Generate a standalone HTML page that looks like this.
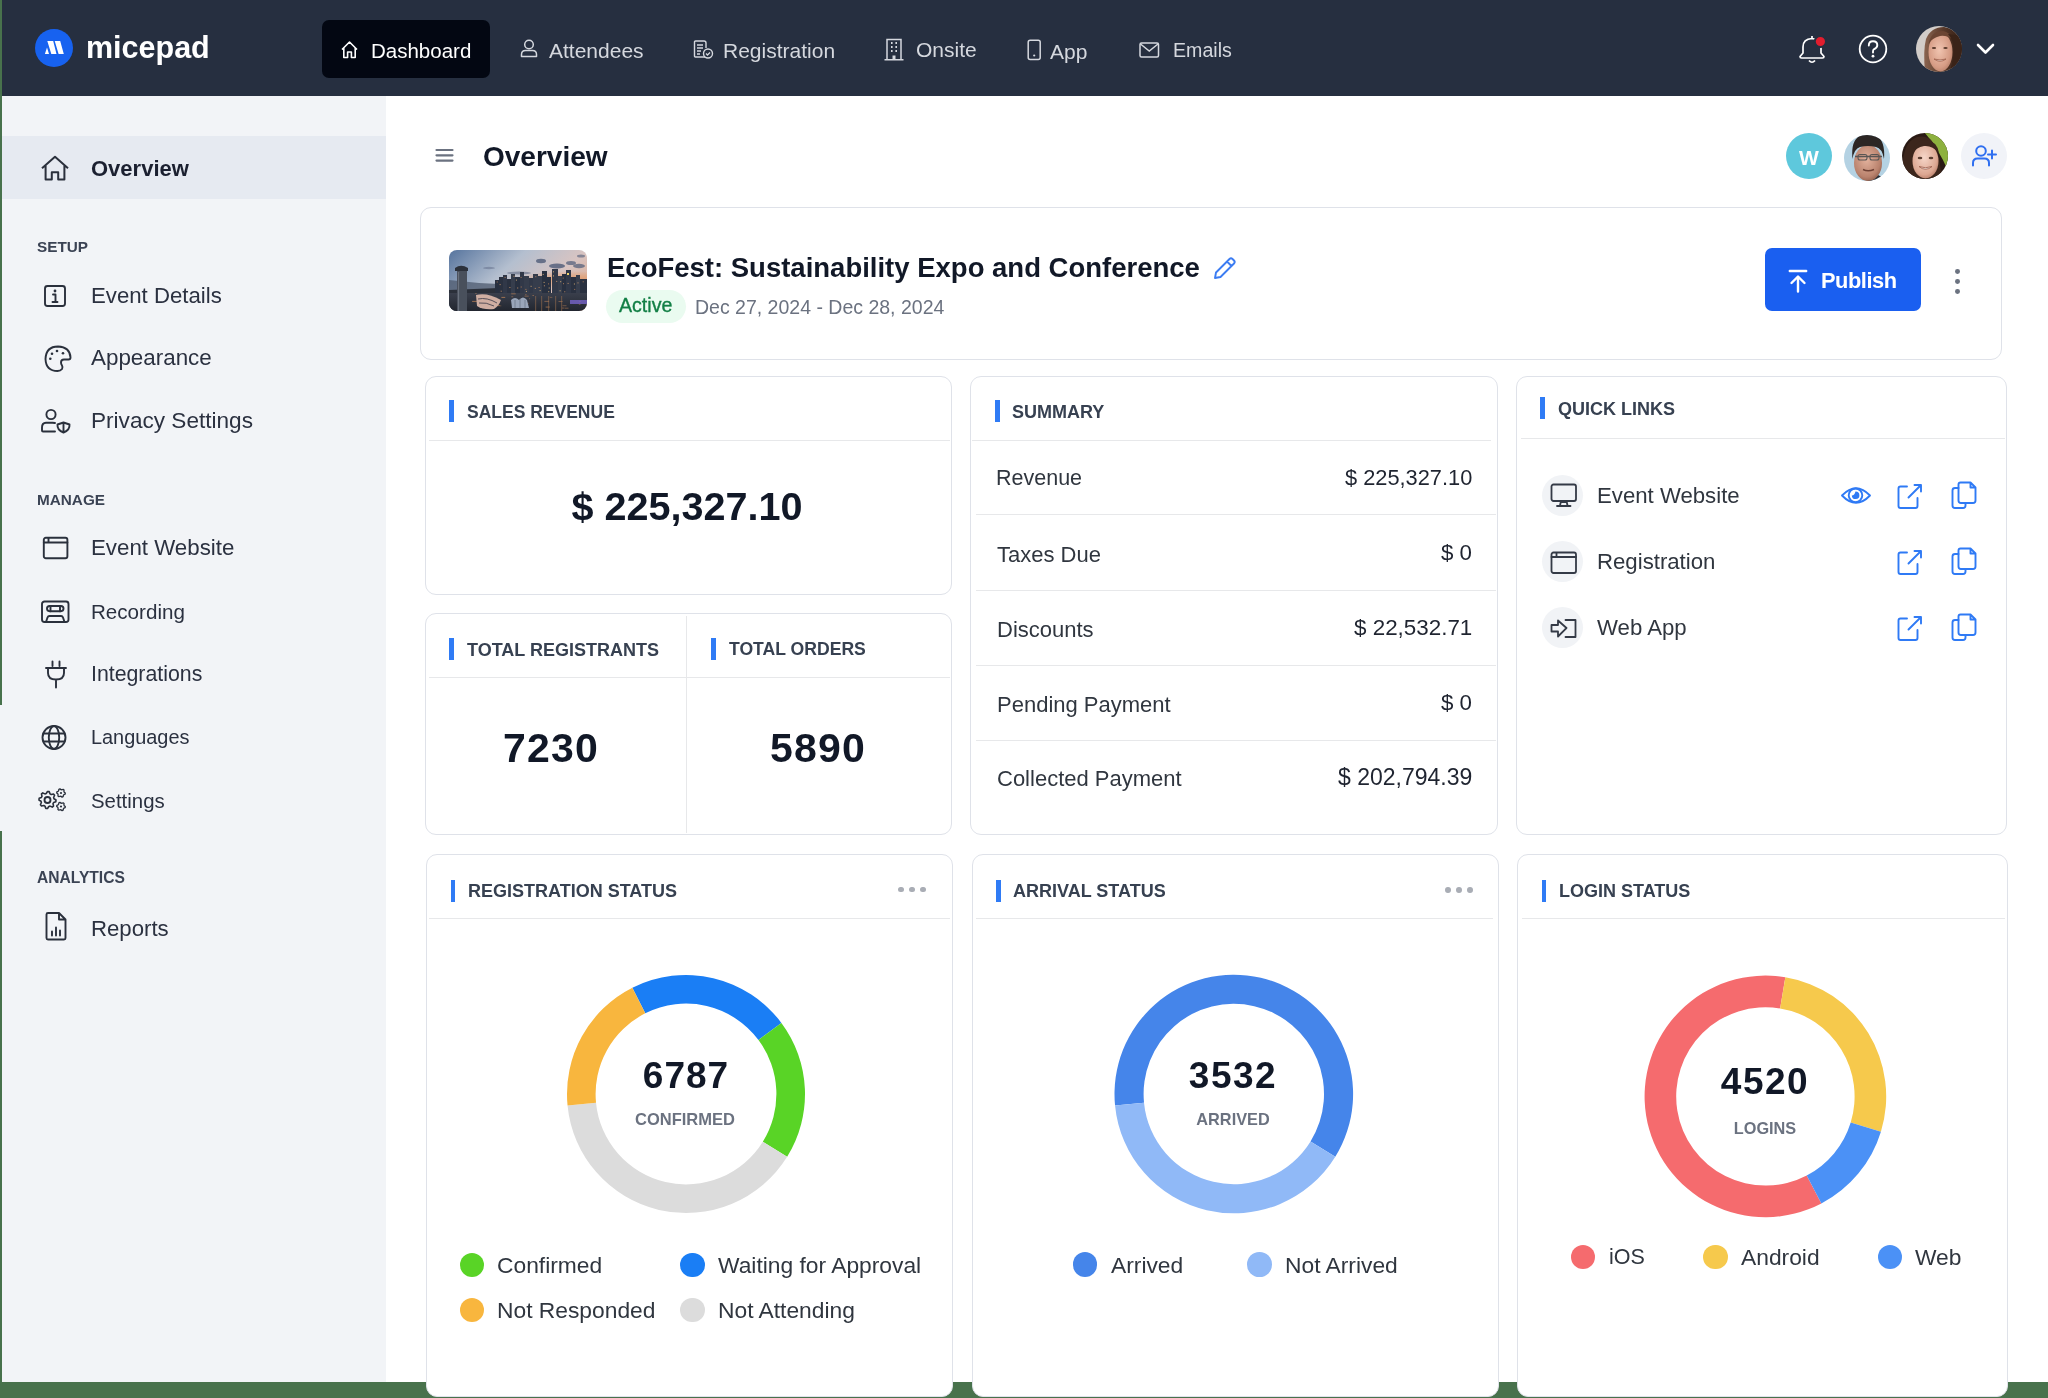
<!DOCTYPE html>
<html><head><meta charset="utf-8"><title>micepad Overview</title>
<style>
html,body{margin:0;padding:0;}
body{width:2048px;height:1398px;position:relative;overflow:hidden;background:#48724c;font-family:"Liberation Sans",sans-serif;}
body>div{position:absolute;}
.t{position:absolute;white-space:nowrap;line-height:1;will-change:transform;}
</style></head><body>
<div style="left:2px;top:0px;width:2046px;height:1382px;background:#ffffff;"></div>
<div style="left:2px;top:0px;width:2046px;height:96px;background:#262f40;"></div>
<div style="left:2px;top:96px;width:384px;height:1286px;background:#f2f4f7;"></div>
<div style="left:0px;top:705px;width:2px;height:126px;background:#f2f4f7;"></div>
<svg style="position:absolute;left:35px;top:29px;" width="38" height="38" viewBox="0 0 38 38"><circle cx="19" cy="19" r="19" fill="#1762f0"/><path d="M9.9 25 L12 18.5 L14 25 Z M12.3 11.9 H18.2 L21.5 25 H16.3 Z M19.7 11.9 H25.2 L28.8 25 H23.6 Z" fill="#fff"/></svg>
<div class="t" style="left:85.50px;top:32.08px;font-size:30.5px;color:#ffffff;font-weight:700;">micepad</div>
<div style="left:322px;top:20px;width:168px;height:58px;background:#030712;border-radius:7px;"></div>
<svg style="position:absolute;left:340px;top:40px;" width="19" height="19" viewBox="0 0 19 19"><path d="M2 9.5 L9.5 2 L17 9.5 M3.8 8 V17.5 H7.6 V12 H11.4 V17.5 H15.2 V8" fill="none" stroke="#fff" stroke-width="1.6" stroke-linejoin="round"/></svg>
<div class="t" style="left:370.80px;top:40.85px;font-size:20.5px;color:#ffffff;font-weight:400;">Dashboard</div>
<svg style="position:absolute;left:520px;top:39px;" width="18" height="19" viewBox="0 0 18 19"><circle cx="9" cy="5.5" r="4.3" fill="none" stroke="#d5d8de" stroke-width="1.5"/><path d="M1.5 17.5 V15.5 Q1.5 11.5 5.5 11.5 H12.5 Q16.5 11.5 16.5 15.5 V17.5 Z" fill="none" stroke="#d5d8de" stroke-width="1.5" stroke-linejoin="round"/></svg>
<div class="t" style="left:549.30px;top:40.02px;font-size:21px;color:#d5d8de;font-weight:400;">Attendees</div>
<svg style="position:absolute;left:693px;top:40px;" width="21" height="19" viewBox="0 0 21 19"><path d="M12 17 H2.5 Q1.5 17 1.5 16 V2 Q1.5 1 2.5 1 H11 Q13 1 13 3 V8" fill="none" stroke="#d5d8de" stroke-width="1.4"/><path d="M4 5h6 M4 8h6 M4 11h4 M4 14h3" stroke="#d5d8de" stroke-width="1.4"/><circle cx="15" cy="13.5" r="4.5" fill="none" stroke="#d5d8de" stroke-width="1.4"/><path d="M13 13.5l1.5 1.5 2.5-2.5" fill="none" stroke="#d5d8de" stroke-width="1.3"/></svg>
<div class="t" style="left:722.80px;top:40.02px;font-size:21px;color:#d5d8de;font-weight:400;">Registration</div>
<svg style="position:absolute;left:884px;top:38px;" width="20" height="23" viewBox="0 0 20 23"><path d="M3 21.5 V1.5 H17 V21.5 M0.5 21.8 H19.5" fill="none" stroke="#d5d8de" stroke-width="1.5"/><path d="M7 5h1.6M11.4 5H13M7 9h1.6M11.4 9H13M7 13h1.6M11.4 13H13" stroke="#d5d8de" stroke-width="2.2"/><path d="M8.5 21.5 V17.5 H11.5 V21.5" fill="#d5d8de"/></svg>
<div class="t" style="left:916.00px;top:39.12px;font-size:21px;color:#d5d8de;font-weight:400;">Onsite</div>
<svg style="position:absolute;left:1027px;top:39px;" width="15" height="22" viewBox="0 0 15 22"><rect x="1.2" y="1.2" width="12" height="19.2" rx="2" fill="none" stroke="#d5d8de" stroke-width="1.5"/><circle cx="7.2" cy="16.5" r="1.1" fill="#d5d8de"/></svg>
<div class="t" style="left:1050.40px;top:40.62px;font-size:21px;color:#d5d8de;font-weight:400;">App</div>
<svg style="position:absolute;left:1139px;top:42px;" width="21" height="16" viewBox="0 0 21 16"><rect x="1" y="1" width="18.5" height="14" rx="1.5" fill="none" stroke="#d5d8de" stroke-width="1.5"/><path d="M1.5 2 L10.25 9 L19 2" fill="none" stroke="#d5d8de" stroke-width="1.5"/></svg>
<div class="t" style="left:1172.50px;top:41.41px;font-size:19.6px;color:#d5d8de;font-weight:400;">Emails</div>
<svg style="position:absolute;left:1798px;top:33px;" width="30" height="33" viewBox="0 0 30 33"><path d="M14 3 V5.5 M5 20 V14 Q5 6 14 5.5 Q23 6 23 14 V20 L26 23.5 Q26 25 24.5 25 H3.5 Q2 25 2 23.5 Z M11 27.5 Q14 31 17 27.5" fill="none" stroke="#fff" stroke-width="1.7" stroke-linejoin="round"/><circle cx="22.4" cy="8.5" r="5.6" fill="#e11d2e" stroke="#262f40" stroke-width="2"/></svg>
<svg style="position:absolute;left:1858px;top:34px;" width="30" height="30" viewBox="0 0 30 30"><circle cx="15" cy="15" r="13.3" fill="none" stroke="#fff" stroke-width="1.8"/><path d="M10.8 11.5 Q10.8 7.3 15 7.3 Q19.3 7.3 19.3 11.3 Q19.3 13.8 15.8 15.3 Q15 15.8 15 17.8 V18.5" fill="none" stroke="#fff" stroke-width="1.9" stroke-linecap="round"/><circle cx="15" cy="22.2" r="1.4" fill="#fff"/></svg>
<svg style="position:absolute;left:1916px;top:26px" width="46" height="46" viewBox="0 0 46 46"><defs><clipPath id="ca1"><circle cx="23" cy="23" r="23"/></clipPath><radialGradient id="sk1" cx="0.45" cy="0.45" r="0.6"><stop offset="0" stop-color="#f0c4b0"/><stop offset="0.75" stop-color="#d69c85"/><stop offset="1" stop-color="#b8806a"/></radialGradient><linearGradient id="hr1" x1="0" y1="0" x2="1" y2="0"><stop offset="0" stop-color="#8a6450"/><stop offset="0.5" stop-color="#5a3a2a"/><stop offset="1" stop-color="#2f1c14"/></linearGradient></defs><g clip-path="url(#ca1)"><rect width="46" height="46" fill="#d2cdc9"/><path d="M9 46 Q7 24 10 13 Q15 1 28 1 Q42 3 46 18 L46 46 Z" fill="url(#hr1)"/><ellipse cx="24.5" cy="26" rx="12" ry="19.5" fill="url(#sk1)"/><path d="M12.5 18 Q15 5 27 5 Q34 6 37 14 Q31 9 24 10 Q16 12 12.5 18 Z" fill="#6b4533"/><path d="M32 8 Q38 14 37.5 26 Q37 38 33 46 L46 46 V10 Z" fill="#3a2318"/><ellipse cx="18" cy="22" rx="2.2" ry="1.1" fill="#5a3a2c"/><ellipse cx="29.5" cy="22" rx="2.2" ry="1.1" fill="#5a3a2c"/><path d="M18 33 Q24 37.5 30 33 Q24 35 18 33 Z" fill="#f4e9e2" stroke="#9a5a48" stroke-width="0.8"/></g></svg>
<svg style="position:absolute;left:1976px;top:43px;" width="19" height="12" viewBox="0 0 19 12"><path d="M2 2 L9.5 9.5 L17 2" fill="none" stroke="#fff" stroke-width="2.6" stroke-linecap="round" stroke-linejoin="round"/></svg>
<div style="left:2px;top:136px;width:384px;height:63px;background:#e6eaf1;"></div>
<svg style="position:absolute;left:40px;top:155px;" width="30" height="27" viewBox="0 0 30 27"><path d="M2 13.3 L15 1.8 L28 13.3 M5.6 10.5 V24.6 H11.8 V17.2 H18.2 V24.6 H24.4 V10.5" fill="none" stroke="#2a303c" stroke-width="2" stroke-linejoin="round"/></svg>
<div class="t" style="left:91.20px;top:157.68px;font-size:22px;color:#1b2030;font-weight:700;">Overview</div>
<div class="t" style="left:37.00px;top:238.75px;font-size:15.3px;color:#3b4354;font-weight:700;">SETUP</div>
<div class="t" style="left:37.00px;top:491.75px;font-size:15.3px;color:#3b4354;font-weight:700;">MANAGE</div>
<div class="t" style="left:37.00px;top:870.19px;font-size:15.6px;color:#3b4354;font-weight:700;">ANALYTICS</div>
<div class="t" style="left:91.10px;top:285.01px;font-size:22.2px;color:#2b3140;font-weight:400;">Event Details</div>
<div class="t" style="left:91.10px;top:347.24px;font-size:22.4px;color:#2b3140;font-weight:400;">Appearance</div>
<div class="t" style="left:91.10px;top:409.57px;font-size:22.6px;color:#2b3140;font-weight:400;">Privacy Settings</div>
<div class="t" style="left:91.10px;top:537.32px;font-size:22.3px;color:#2b3140;font-weight:400;">Event Website</div>
<div class="t" style="left:91.10px;top:601.56px;font-size:20.6px;color:#2b3140;font-weight:400;">Recording</div>
<div class="t" style="left:91.10px;top:663.87px;font-size:21.3px;color:#2b3140;font-weight:400;">Integrations</div>
<div class="t" style="left:91.10px;top:727.55px;font-size:19.9px;color:#2b3140;font-weight:400;">Languages</div>
<div class="t" style="left:91.10px;top:790.63px;font-size:20.4px;color:#2b3140;font-weight:400;">Settings</div>
<div class="t" style="left:91.10px;top:917.81px;font-size:22.2px;color:#2b3140;font-weight:400;">Reports</div>
<svg style="position:absolute;left:43px;top:284px;" width="24" height="24" viewBox="0 0 24 24"><rect x="2" y="2" width="20" height="20" rx="2.5" fill="none" stroke="#2a303c" stroke-width="1.9" stroke-linecap="round" stroke-linejoin="round"/><circle cx="12" cy="7" r="1.4" fill="#2a303c"/><path d="M10 10.5 H12.5 V18 M9.5 18 H14.5" fill="none" stroke="#2a303c" stroke-width="1.9" stroke-linecap="round" stroke-linejoin="round"/></svg>
<svg style="position:absolute;left:43px;top:344px;" width="30" height="30" viewBox="0 0 30 30"><path d="M14.5 27 Q3 27 2.5 15 Q3 2.5 15 2.5 Q27 3 27.5 13.5 Q27.5 15.5 25.5 15.5 H21 Q18 15.5 18 18.5 Q18 20 19 21.5 Q20 23 19 25 Q17.5 27 14.5 27 Z" fill="none" stroke="#2a303c" stroke-width="1.9" stroke-linecap="round" stroke-linejoin="round"/><circle cx="9" cy="9.8" r="1.3" fill="#2a303c"/><circle cx="14" cy="7" r="1.3" fill="#2a303c"/><circle cx="20" cy="9.3" r="1.3" fill="#2a303c"/><circle cx="7.3" cy="14.8" r="1.3" fill="#2a303c"/></svg>
<svg style="position:absolute;left:40px;top:408px;" width="32" height="26" viewBox="0 0 32 26"><circle cx="11" cy="6.5" r="4.6" fill="none" stroke="#2a303c" stroke-width="1.9" stroke-linecap="round" stroke-linejoin="round"/><path d="M15 15 Q13 14.5 11 14.8 H6 Q2 15 2 19.5 V22.5 Q2 23.5 3 23.5 H15" fill="none" stroke="#2a303c" stroke-width="1.9" stroke-linecap="round" stroke-linejoin="round"/><path d="M23.5 14.5 L29.5 16.5 Q30 22 23.5 24.5 Q17 22 17.5 16.5 Z M23.5 14.5 V24.5" fill="none" stroke="#2a303c" stroke-width="1.9" stroke-linecap="round" stroke-linejoin="round"/></svg>
<svg style="position:absolute;left:42px;top:536px;" width="27" height="24" viewBox="0 0 27 24"><rect x="1.8" y="1.8" width="23.6" height="20.4" rx="2" fill="none" stroke="#2a303c" stroke-width="1.9" stroke-linecap="round" stroke-linejoin="round"/><path d="M1.8 6.5 H25.4 M6.5 2 V6.5" fill="none" stroke="#2a303c" stroke-width="1.9" stroke-linecap="round" stroke-linejoin="round"/></svg>
<svg style="position:absolute;left:40px;top:600px;" width="30" height="24" viewBox="0 0 30 24"><rect x="2" y="1.5" width="26.5" height="20.5" rx="2.5" fill="none" stroke="#2a303c" stroke-width="1.9" stroke-linecap="round" stroke-linejoin="round"/><rect x="7" y="6" width="16.5" height="5.2" rx="2.6" fill="none" stroke="#2a303c" stroke-width="1.9" stroke-linecap="round" stroke-linejoin="round"/><path d="M10.5 6 V11.2 M20 6 V11.2 M6 22 L7.5 17.5 Q8 16 9.5 16 H21 Q22.5 16 23 17.5 L24.5 22" fill="none" stroke="#2a303c" stroke-width="1.9" stroke-linecap="round" stroke-linejoin="round"/></svg>
<svg style="position:absolute;left:44px;top:660px;" width="24" height="30" viewBox="0 0 24 30"><path d="M8.5 1.5 V6 M15.5 1.5 V6 M2 8 H22 M4 8 V13 Q4 19.5 12 19.5 Q20 19.5 20 13 V8 M12 19.5 V27.5" fill="none" stroke="#2a303c" stroke-width="1.9" stroke-linecap="round" stroke-linejoin="round"/></svg>
<svg style="position:absolute;left:40px;top:724px;" width="28" height="28" viewBox="0 0 28 28"><circle cx="14" cy="13.5" r="11.5" fill="none" stroke="#2a303c" stroke-width="1.9" stroke-linecap="round" stroke-linejoin="round"/><ellipse cx="14" cy="13.5" rx="5.2" ry="11.5" fill="none" stroke="#2a303c" stroke-width="1.9" stroke-linecap="round" stroke-linejoin="round"/><path d="M3.5 9.5 H24.5 M3.5 17.5 H24.5" fill="none" stroke="#2a303c" stroke-width="1.9" stroke-linecap="round" stroke-linejoin="round" stroke-width="1.8"/></svg>
<svg style="position:absolute;left:38px;top:787px;" width="30" height="26" viewBox="0 0 30 26"><polygon points="18.00,13.00 17.84,14.66 15.63,15.54 15.01,16.68 15.51,19.01 14.22,20.07 12.04,19.13 10.79,19.50 9.50,21.50 7.84,21.34 6.96,19.13 5.82,18.51 3.49,19.01 2.43,17.72 3.37,15.54 3.00,14.29 1.00,13.00 1.16,11.34 3.37,10.46 3.99,9.32 3.49,6.99 4.78,5.93 6.96,6.87 8.21,6.50 9.50,4.50 11.16,4.66 12.04,6.87 13.18,7.49 15.51,6.99 16.57,8.28 15.63,10.46 16.00,11.71" fill="none" stroke="#2a303c" stroke-width="1.6" stroke-linejoin="round"/><circle cx="9.5" cy="13" r="3" fill="none" stroke="#2a303c" stroke-width="1.9" stroke-linecap="round" stroke-linejoin="round" stroke-width="1.6"/><polygon points="27.30,6.00 27.15,7.11 25.90,7.68 25.37,8.37 25.15,9.72 24.11,10.15 23.00,9.35 22.13,9.24 20.85,9.72 19.96,9.04 20.10,7.68 19.76,6.87 18.70,6.00 18.85,4.89 20.10,4.32 20.63,3.63 20.85,2.28 21.89,1.85 23.00,2.65 23.87,2.76 25.15,2.28 26.04,2.96 25.90,4.32 26.24,5.13" fill="none" stroke="#2a303c" stroke-width="1.3" stroke-linejoin="round"/><polygon points="27.30,19.50 27.15,20.61 25.90,21.18 25.37,21.87 25.15,23.22 24.11,23.65 23.00,22.85 22.13,22.74 20.85,23.22 19.96,22.54 20.10,21.18 19.76,20.37 18.70,19.50 18.85,18.39 20.10,17.82 20.63,17.13 20.85,15.78 21.89,15.35 23.00,16.15 23.87,16.26 25.15,15.78 26.04,16.46 25.90,17.82 26.24,18.63" fill="none" stroke="#2a303c" stroke-width="1.3" stroke-linejoin="round"/><circle cx="23" cy="6" r="1.1" fill="#2a303c"/><circle cx="23" cy="19.5" r="1.1" fill="#2a303c"/></svg>
<svg style="position:absolute;left:44px;top:911px;" width="25" height="31" viewBox="0 0 25 31"><path d="M4 2 H15 L21.5 8.5 V27 Q21.5 28.5 20 28.5 H4 Q2.5 28.5 2.5 27 V3.5 Q2.5 2 4 2 Z M15 2 V8.5 H21.5" fill="none" stroke="#2a303c" stroke-width="1.9" stroke-linecap="round" stroke-linejoin="round"/><path d="M8 24.5 V20.5 M12 24.5 V16.5 M16 24.5 V19.5" fill="none" stroke="#2a303c" stroke-width="1.9" stroke-linecap="round" stroke-linejoin="round"/></svg>
<svg style="position:absolute;left:435px;top:148px;" width="19" height="15" viewBox="0 0 19 15"><path d="M1.5 2 H17.5 M1.5 7.3 H17.5 M1.5 12.6 H17.5" stroke="#6b7280" stroke-width="2.2" stroke-linecap="round"/></svg>
<div class="t" style="left:482.60px;top:143.40px;font-size:28px;color:#111827;font-weight:700;">Overview</div>
<div style="left:1786px;top:133px;width:46px;height:46px;border-radius:50%;background:#5ec8dc;"></div>
<div class="t" style="left:1509.00px;width:600px;text-align:center;top:146.72px;font-size:21px;color:#ffffff;font-weight:700;">W</div>
<svg style="position:absolute;left:1844px;top:134.5px" width="46" height="46" viewBox="0 0 46 46"><defs><clipPath id="ca2"><circle cx="23" cy="23" r="23"/></clipPath><radialGradient id="sk2" cx="0.45" cy="0.4" r="0.65"><stop offset="0" stop-color="#e3b29d"/><stop offset="0.75" stop-color="#b9826d"/><stop offset="1" stop-color="#8f5d4b"/></radialGradient></defs><g clip-path="url(#ca2)"><rect width="46" height="46" fill="#b4d2e3"/><path d="M22 46 L34 40 L46 46 Z" fill="#2b2f36"/><ellipse cx="24" cy="28" rx="14" ry="18" fill="url(#sk2)"/><path d="M8.5 24 Q6 -1 24 -1 Q42 -1 40 24 Q38 13 32 12 Q24 10 16 12 Q10 14 8.5 24 Z" fill="#2c2624"/><path d="M11 21.5 H38" stroke="#5a5654" stroke-width="1.4"/><rect x="14" y="19.5" width="9" height="5.5" rx="2" fill="none" stroke="#5a5654" stroke-width="1.1"/><rect x="26" y="19.5" width="9" height="5.5" rx="2" fill="none" stroke="#5a5654" stroke-width="1.1"/><path d="M19 34.5 Q24 37 30 34.5" stroke="#6d4034" stroke-width="1.4" fill="none"/></g></svg>
<svg style="position:absolute;left:1902px;top:133px" width="46" height="46" viewBox="0 0 46 46"><defs><clipPath id="ca3"><circle cx="23" cy="23" r="23"/></clipPath><radialGradient id="sk3" cx="0.45" cy="0.4" r="0.65"><stop offset="0" stop-color="#f6d6c8"/><stop offset="0.75" stop-color="#dca792"/><stop offset="1" stop-color="#b57b66"/></radialGradient></defs><g clip-path="url(#ca3)"><rect width="46" height="46" fill="#2a1a14"/><path d="M22 -1 H47 V40 Q36 14 22 -1 Z" fill="#8db13e"/><path d="M1 40 Q-1 10 15 4 Q24 2 29 7 Q37 16 39 40 L36 46 H8 Z" fill="#3c261c"/><ellipse cx="23.5" cy="28" rx="13" ry="17.5" fill="url(#sk3)"/><path d="M10 22 Q11 7 24 7 Q35 8 37 20 Q30 12 22 13 Q14 14 10 22 Z" fill="#3c261c"/><ellipse cx="18" cy="25" rx="2.3" ry="1.2" fill="#5b3d30"/><ellipse cx="29" cy="25" rx="2.3" ry="1.2" fill="#5b3d30"/><path d="M17 33.5 Q23.5 39 30 33.5 Q23.5 36 17 33.5 Z" fill="#f7ece6" stroke="#9c5c4a" stroke-width="0.8"/></g></svg>
<div style="left:1961px;top:133px;width:46px;height:46px;border-radius:50%;background:#f1f3f8;"></div>
<svg style="position:absolute;left:1971px;top:144px;" width="27" height="24" viewBox="0 0 27 24"><circle cx="10" cy="7" r="4.8" fill="none" stroke="#2f6ff0" stroke-width="2"/><path d="M2 21.5 V19 Q2 14.5 6.5 14.5 H13.5 Q18 14.5 18 19 V21.5 M21 6.5 V14.5 M17 10.5 H25" fill="none" stroke="#2f6ff0" stroke-width="2" stroke-linecap="round"/></svg>
<div style="left:420px;top:207px;width:1582px;height:153px;box-sizing:border-box;border:1.6px solid #dfe2e9;border-radius:11px;background:#fff;"></div>
<svg style="position:absolute;left:449px;top:250px" width="138" height="61" viewBox="0 0 138 61"><defs><clipPath id="ci"><rect width="138" height="61" rx="8"/></clipPath><linearGradient id="sky" x1="0" y1="0" x2="1" y2="0.5"><stop offset="0" stop-color="#56749e"/><stop offset="0.45" stop-color="#b4bfcf"/><stop offset="0.8" stop-color="#d8c4c2"/><stop offset="1" stop-color="#dcb4a0"/></linearGradient><radialGradient id="hz" cx="0.5" cy="0.5" r="0.5"><stop offset="0" stop-color="#e39863" stop-opacity="0.95"/><stop offset="1" stop-color="#e39863" stop-opacity="0"/></radialGradient><linearGradient id="wat" x1="0" y1="0" x2="0" y2="1"><stop offset="0" stop-color="#3a3f4c"/><stop offset="1" stop-color="#22262f"/></linearGradient></defs><g clip-path="url(#ci)"><rect width="138" height="61" fill="url(#sky)"/><ellipse cx="120" cy="30" rx="55" ry="9" fill="url(#hz)"/><ellipse cx="92" cy="11" rx="5" ry="2.2" fill="#4f5b78" opacity="0.8"/><ellipse cx="108" cy="16" rx="8" ry="2.5" fill="#4f5b78" opacity="0.8"/><ellipse cx="122" cy="13" rx="5" ry="2" fill="#4f5b78" opacity="0.7"/><ellipse cx="130" cy="16" rx="6" ry="2.2" fill="#4f5b78" opacity="0.7"/><ellipse cx="70" cy="23" rx="12" ry="1.5" fill="#4f5b78" opacity="0.5"/><ellipse cx="40" cy="18" rx="6" ry="1.2" fill="#4f5b78" opacity="0.4"/><ellipse cx="132" cy="6" rx="4" ry="1.5" fill="#4f5b78" opacity="0.6"/><path d="M0 30 Q25 33 50 34 L50 42 L0 44 Z" fill="#4e5a6e" opacity="0.75"/><path d="M0 40 L50 38 V61 H0 Z" fill="#2b303a"/><rect x="46" y="30" width="5" height="14" fill="#283040"/><rect x="47.7" y="31.5" width="1" height="1" fill="#c98a5a" opacity="0.8"/><rect x="50" y="27" width="4" height="17" fill="#2a3140"/><rect x="51.7" y="40.7" width="1" height="1" fill="#e0a36e" opacity="0.8"/><rect x="50.6" y="34.1" width="1" height="1" fill="#e0a36e" opacity="0.8"/><rect x="54" y="25" width="4" height="19" fill="#313848"/><rect x="55.6" y="26.9" width="1" height="1" fill="#c98a5a" opacity="0.8"/><rect x="58" y="29" width="5" height="15" fill="#2a3140"/><rect x="60.4" y="37.0" width="1" height="1" fill="#e0a36e" opacity="0.8"/><rect x="62" y="24" width="4" height="20" fill="#363d4c"/><rect x="64.5" y="25.8" width="1" height="1" fill="#e0a36e" opacity="0.8"/><rect x="66" y="27" width="5" height="17" fill="#283040"/><rect x="66.9" y="29.6" width="1" height="1" fill="#f2c27a" opacity="0.8"/><rect x="68.2" y="37.5" width="1" height="1" fill="#e0a36e" opacity="0.8"/><rect x="71" y="22" width="4" height="22" fill="#313848"/><rect x="71.7" y="36.5" width="1" height="1" fill="#c98a5a" opacity="0.8"/><rect x="71.6" y="26.9" width="1" height="1" fill="#c98a5a" opacity="0.8"/><rect x="75" y="26" width="5" height="18" fill="#363d4c"/><rect x="76.9" y="40.9" width="1" height="1" fill="#f2c27a" opacity="0.8"/><rect x="76.4" y="38.9" width="1" height="1" fill="#c98a5a" opacity="0.8"/><rect x="80" y="28" width="4" height="16" fill="#313848"/><rect x="81.6" y="35.8" width="1" height="1" fill="#f2c27a" opacity="0.8"/><rect x="84" y="24" width="5" height="20" fill="#363d4c"/><rect x="86.3" y="26.2" width="1" height="1" fill="#c98a5a" opacity="0.8"/><rect x="85.8" y="37.9" width="1" height="1" fill="#e0a36e" opacity="0.8"/><rect x="89" y="26" width="4" height="18" fill="#363d4c"/><rect x="89.6" y="37.0" width="1" height="1" fill="#c98a5a" opacity="0.8"/><rect x="90.6" y="40.1" width="1" height="1" fill="#f2c27a" opacity="0.8"/><rect x="93" y="21" width="5" height="23" fill="#283040"/><rect x="94.6" y="31.9" width="1" height="1" fill="#f2c27a" opacity="0.8"/><rect x="93.7" y="23.9" width="1" height="1" fill="#f2c27a" opacity="0.8"/><rect x="94.9" y="35.3" width="1" height="1" fill="#e0a36e" opacity="0.8"/><rect x="98" y="27" width="4" height="17" fill="#283040"/><rect x="99.7" y="37.5" width="1" height="1" fill="#f2c27a" opacity="0.8"/><rect x="99.1" y="33.4" width="1" height="1" fill="#c98a5a" opacity="0.8"/><rect x="99.2" y="41.2" width="1" height="1" fill="#f2c27a" opacity="0.8"/><rect x="103" y="19" width="6" height="25" fill="#313848"/><rect x="104.0" y="21.3" width="1" height="1" fill="#f2c27a" opacity="0.8"/><rect x="104.0" y="25.4" width="1" height="1" fill="#f2c27a" opacity="0.8"/><rect x="107.2" y="30.9" width="1" height="1" fill="#e0a36e" opacity="0.8"/><rect x="109" y="26" width="4" height="18" fill="#363d4c"/><rect x="110.6" y="40.3" width="1" height="1" fill="#f2c27a" opacity="0.8"/><rect x="111.2" y="31.2" width="1" height="1" fill="#f2c27a" opacity="0.8"/><rect x="113" y="24" width="4" height="20" fill="#283040"/><rect x="115.3" y="41.3" width="1" height="1" fill="#e0a36e" opacity="0.8"/><rect x="113.7" y="27.6" width="1" height="1" fill="#c98a5a" opacity="0.8"/><rect x="114.0" y="33.2" width="1" height="1" fill="#c98a5a" opacity="0.8"/><rect x="117" y="20" width="5" height="24" fill="#313848"/><rect x="118.3" y="24.1" width="1" height="1" fill="#c98a5a" opacity="0.8"/><rect x="118.6" y="32.9" width="1" height="1" fill="#e0a36e" opacity="0.8"/><rect x="122" y="27" width="5" height="17" fill="#2a3140"/><rect x="125.2" y="38.9" width="1" height="1" fill="#c98a5a" opacity="0.8"/><rect x="124.9" y="33.5" width="1" height="1" fill="#f2c27a" opacity="0.8"/><rect x="127" y="25" width="4" height="19" fill="#363d4c"/><rect x="128.5" y="32.4" width="1" height="1" fill="#e0a36e" opacity="0.8"/><rect x="131" y="29" width="7" height="15" fill="#2a3140"/><rect x="133.7" y="31.3" width="1" height="1" fill="#c98a5a" opacity="0.8"/><rect x="118" y="23" width="2" height="2" fill="#f1d36a"/><path d="M0 43 H138 V61 H0 Z" fill="url(#wat)"/><rect x="26.1" y="43.0" width="1.6" height="0.9" fill="#c98a5a" opacity="0.44"/><rect x="62.2" y="43.4" width="4.5" height="0.9" fill="#c98a5a" opacity="0.65"/><rect x="37.2" y="46.8" width="2.4" height="0.9" fill="#c98a5a" opacity="0.55"/><rect x="34.2" y="55.7" width="5.0" height="0.9" fill="#c98a5a" opacity="0.59"/><rect x="76.1" y="44.3" width="1.4" height="0.9" fill="#c98a5a" opacity="0.54"/><rect x="50.7" y="55.4" width="1.6" height="0.9" fill="#c98a5a" opacity="0.41"/><rect x="130.3" y="50.9" width="1.6" height="0.9" fill="#c98a5a" opacity="0.62"/><rect x="23.1" y="50.9" width="4.9" height="0.9" fill="#c98a5a" opacity="0.75"/><rect x="100.8" y="46.9" width="2.5" height="0.9" fill="#c98a5a" opacity="0.47"/><rect x="109.5" y="51.0" width="4.1" height="0.9" fill="#c98a5a" opacity="0.53"/><rect x="45.9" y="55.2" width="4.9" height="0.9" fill="#c98a5a" opacity="0.74"/><rect x="113.5" y="55.3" width="4.0" height="0.9" fill="#c98a5a" opacity="0.49"/><rect x="80.0" y="48.3" width="1.1" height="0.9" fill="#c98a5a" opacity="0.41"/><rect x="52.4" y="46.9" width="3.8" height="0.9" fill="#c98a5a" opacity="0.78"/><rect x="71.9" y="57.1" width="5.0" height="0.9" fill="#c98a5a" opacity="0.78"/><rect x="62.3" y="46.3" width="1.9" height="0.9" fill="#c98a5a" opacity="0.48"/><rect x="43.7" y="52.4" width="4.6" height="0.9" fill="#c98a5a" opacity="0.74"/><rect x="75.6" y="52.8" width="4.2" height="0.9" fill="#c98a5a" opacity="0.43"/><rect x="96.6" y="56.6" width="4.1" height="0.9" fill="#c98a5a" opacity="0.70"/><rect x="75.5" y="45.7" width="4.2" height="0.9" fill="#c98a5a" opacity="0.53"/><rect x="112.9" y="57.6" width="2.6" height="0.9" fill="#c98a5a" opacity="0.56"/><rect x="129.8" y="53.9" width="1.7" height="0.9" fill="#c98a5a" opacity="0.45"/><rect x="37.5" y="56.6" width="4.2" height="0.9" fill="#c98a5a" opacity="0.46"/><rect x="115.9" y="57.7" width="3.6" height="0.9" fill="#c98a5a" opacity="0.54"/><rect x="83.6" y="45.0" width="1.1" height="0.9" fill="#c98a5a" opacity="0.79"/><rect x="95.4" y="50.9" width="4.7" height="0.9" fill="#c98a5a" opacity="0.57"/><rect x="86" y="46" width="1.2" height="15" fill="#a8774f" opacity="0.45"/><rect x="92" y="46" width="1.2" height="15" fill="#a8774f" opacity="0.45"/><rect x="99" y="46" width="1.2" height="15" fill="#a8774f" opacity="0.45"/><rect x="106" y="46" width="1.2" height="15" fill="#a8774f" opacity="0.45"/><rect x="112" y="46" width="1.2" height="15" fill="#a8774f" opacity="0.45"/><path d="M27 45 Q38 42 52 50 Q50 56 45 59 Q34 60 28 56 Z" fill="#cfaea2"/><path d="M29 49 Q38 47 48 53 M30 53 Q37 52 45 56" stroke="#4a4550" stroke-width="0.9" fill="none"/><path d="M62 50 Q66 46 70 50 Q74 45 78 50 L80 58 H63 Z" fill="#9aa6ba"/><path d="M66 50 V58 M71 49 V58 M76 50 V58" stroke="#6d788c" stroke-width="0.8"/><path d="M121 50 H138 V54 H121 Z" fill="#7764c8" opacity="0.8"/><path d="M8 20 H18 V61 H8 Z" fill="#49505c"/><path d="M9.5 22 V61" stroke="#6a717d" stroke-width="1.2"/><path d="M6 18 Q12 13.5 19 18 V21 H6 Z" fill="#2c313b"/></g></svg>
<div class="t" style="left:606.90px;top:254.22px;font-size:27.5px;color:#111827;font-weight:700;">EcoFest: Sustainability Expo and Conference</div>
<svg style="position:absolute;left:1212px;top:256px;" width="26" height="25" viewBox="0 0 26 25"><path d="M3 22 L4 16.5 L17.5 3 Q19 1.6 20.5 3 L22 4.5 Q23.4 6 22 7.5 L8.5 21 Z M15 5.5 L19.5 10" fill="none" stroke="#3b7cf2" stroke-width="1.9" stroke-linejoin="round"/></svg>
<div style="left:606px;top:290px;width:80px;height:33px;background:#eafbf0;border-radius:17px;"></div>
<div class="t" style="left:619.40px;top:296.41px;font-size:19.6px;color:#127f45;font-weight:400;-webkit-text-stroke:0.35px #127f45;">Active</div>
<div class="t" style="left:694.70px;top:297.99px;font-size:19.5px;color:#6b7280;font-weight:400;">Dec 27, 2024 - Dec 28, 2024</div>
<div style="left:1765px;top:248px;width:156px;height:63px;background:#1a5ff0;border-radius:7px;"></div>
<svg style="position:absolute;left:1787px;top:269px;" width="22" height="25" viewBox="0 0 22 25"><path d="M2.8 2 H19.2 M11 22.5 V8 M4.5 14 L11 7.5 L17.5 14" fill="none" stroke="#fff" stroke-width="2.4" stroke-linecap="round" stroke-linejoin="round"/></svg>
<div class="t" style="left:1820.50px;top:269.85px;font-size:21.8px;color:#ffffff;font-weight:700;letter-spacing:-0.45px;">Publish</div>
<div style="left:1955.0px;top:268.8px;width:4.8px;height:4.8px;border-radius:50%;background:#6b7280;"></div>
<div style="left:1955.0px;top:278.9px;width:4.8px;height:4.8px;border-radius:50%;background:#6b7280;"></div>
<div style="left:1955.0px;top:289.0px;width:4.8px;height:4.8px;border-radius:50%;background:#6b7280;"></div>
<div style="left:424.59999999999997px;top:375.5px;width:527.1px;height:219.19999999999996px;box-sizing:border-box;border:1.6px solid #dfe2e9;border-radius:11px;background:#fff;"></div>
<div style="left:449px;top:400px;width:4.6px;height:21.5px;background:#2f7bf5;"></div>
<div class="t" style="left:466.70px;top:403.69px;font-size:17.5px;color:#374151;font-weight:700;">SALES REVENUE</div>
<div style="left:429px;top:439.5px;width:521px;height:1.2px;background:#e7e8ea;"></div>
<div class="t" style="left:386.90px;width:600px;text-align:center;top:486.98px;font-size:39.6px;color:#111827;font-weight:700;">$ 225,327.10</div>
<div style="left:424.59999999999997px;top:613.1px;width:527.1px;height:222.40000000000006px;box-sizing:border-box;border:1.6px solid #dfe2e9;border-radius:11px;background:#fff;"></div>
<div style="left:449px;top:638px;width:4.6px;height:21.5px;background:#2f7bf5;"></div>
<div class="t" style="left:466.80px;top:641.06px;font-size:18px;color:#374151;font-weight:700;">TOTAL REGISTRANTS</div>
<div style="left:711.1px;top:638px;width:4.6px;height:21.5px;background:#2f7bf5;"></div>
<div class="t" style="left:728.50px;top:641.40px;font-size:17.6px;color:#374151;font-weight:700;">TOTAL ORDERS</div>
<div style="left:429px;top:677px;width:521px;height:1.2px;background:#e7e8ea;"></div>
<div style="left:686.2px;top:616px;width:1.2px;height:217px;background:#e7e8ea;"></div>
<div class="t" style="left:251.00px;width:600px;text-align:center;top:727.69px;font-size:41px;color:#111827;font-weight:700;letter-spacing:1.2px;">7230</div>
<div class="t" style="left:517.50px;width:600px;text-align:center;top:727.69px;font-size:41px;color:#111827;font-weight:700;letter-spacing:1.2px;">5890</div>
<div style="left:970.2px;top:375.5px;width:527.4px;height:459.59999999999997px;box-sizing:border-box;border:1.6px solid #dfe2e9;border-radius:11px;background:#fff;"></div>
<div style="left:995px;top:400px;width:4.6px;height:21.5px;background:#2f7bf5;"></div>
<div class="t" style="left:1011.90px;top:403.26px;font-size:18px;color:#374151;font-weight:700;">SUMMARY</div>
<div style="left:972px;top:439.5px;width:519px;height:1.2px;background:#e7e8ea;"></div>
<div class="t" style="left:995.50px;top:468.10px;font-size:21.5px;color:#30363f;font-weight:400;">Revenue</div>
<div class="t" style="right:576.00px;top:467.35px;font-size:21.8px;color:#1f2430;font-weight:400;">$ 225,327.10</div>
<div class="t" style="left:997.00px;top:543.98px;font-size:22px;color:#30363f;font-weight:400;">Taxes Due</div>
<div class="t" style="right:576.00px;top:542.32px;font-size:22.3px;color:#1f2430;font-weight:400;">$ 0</div>
<div class="t" style="left:997.00px;top:618.58px;font-size:22px;color:#30363f;font-weight:400;">Discounts</div>
<div class="t" style="right:576.00px;top:617.34px;font-size:22.4px;color:#1f2430;font-weight:400;">$ 22,532.71</div>
<div class="t" style="left:997.00px;top:694.18px;font-size:22px;color:#30363f;font-weight:400;">Pending Payment</div>
<div class="t" style="right:576.00px;top:691.72px;font-size:22.3px;color:#1f2430;font-weight:400;">$ 0</div>
<div class="t" style="left:997.00px;top:768.08px;font-size:22px;color:#30363f;font-weight:400;">Collected Payment</div>
<div class="t" style="right:576.00px;top:766.13px;font-size:23px;color:#1f2430;font-weight:400;">$ 202,794.39</div>
<div style="left:976px;top:514.0px;width:520px;height:1.2px;background:#e7e8ea;"></div>
<div style="left:976px;top:589.6999999999999px;width:520px;height:1.2px;background:#e7e8ea;"></div>
<div style="left:976px;top:664.6999999999999px;width:520px;height:1.2px;background:#e7e8ea;"></div>
<div style="left:976px;top:739.6999999999999px;width:520px;height:1.2px;background:#e7e8ea;"></div>
<div style="left:1516.1000000000001px;top:375.5px;width:490.44999999999993px;height:459.59999999999997px;box-sizing:border-box;border:1.6px solid #dfe2e9;border-radius:11px;background:#fff;"></div>
<div style="left:1540px;top:397px;width:4.6px;height:21.5px;background:#2f7bf5;"></div>
<div class="t" style="left:1557.60px;top:400.06px;font-size:18px;color:#374151;font-weight:700;">QUICK LINKS</div>
<div style="left:1521px;top:437.6px;width:483.5px;height:1.2px;background:#e7e8ea;"></div>
<div style="left:1542.2px;top:475.1px;width:41.2px;height:41.2px;border-radius:50%;background:#f1f3f6;"></div>
<div class="t" style="left:1596.80px;top:485.01px;font-size:22.2px;color:#30363f;font-weight:400;">Event Website</div>
<svg style="position:absolute;left:1896px;top:482.7px;" width="28" height="28" viewBox="0 0 28 28"><path d="M11 3.5 H4.5 Q2.5 3.5 2.5 5.5 V23 Q2.5 25 4.5 25 H19.5 Q21.5 25 21.5 23 V15" fill="none" stroke="#2f7af5" stroke-width="1.9" stroke-linecap="round" stroke-linejoin="round"/><path d="M12.5 14.5 L25 2 M18.5 2 H25 V8.5" fill="none" stroke="#2f7af5" stroke-width="1.9" stroke-linecap="round" stroke-linejoin="round"/></svg>
<svg style="position:absolute;left:1950px;top:480.2px;" width="28" height="31" viewBox="0 0 28 31"><path d="M8.5 8 H5 Q2.5 8 2.5 10.5 V25.5 Q2.5 28 5 28 H13 Q15.5 28 15.5 25.5 V23" fill="none" stroke="#2f7af5" stroke-width="1.9" stroke-linecap="round" stroke-linejoin="round"/><path d="M10.5 2.5 H20.5 L25.5 7.5 V20.5 Q25.5 23 23 23 H11 Q8.5 23 8.5 20.5 V4.5 Q8.5 2.5 10.5 2.5 Z M20.5 2.5 V7.5 H25.5" fill="none" stroke="#2f7af5" stroke-width="1.9" stroke-linecap="round" stroke-linejoin="round"/></svg>
<svg style="position:absolute;left:1840px;top:485.2px;" width="32" height="21" viewBox="0 0 32 21"><path d="M2 10.5 Q16 -4 30 10.5 Q16 25 2 10.5 Z" fill="none" stroke="#2f7af5" stroke-width="1.9" stroke-linecap="round" stroke-linejoin="round"/><circle cx="15.5" cy="10.3" r="6.8" fill="none" stroke="#2f7af5" stroke-width="1.9" stroke-linecap="round" stroke-linejoin="round"/><path d="M15.5 6.5 A3.8 3.8 0 1 1 11.8 10.5 Q14.5 10.5 15.5 6.5 Z" fill="#2f7af5"/></svg>
<div style="left:1542.2px;top:541.0px;width:41.2px;height:41.2px;border-radius:50%;background:#f1f3f6;"></div>
<div class="t" style="left:1596.80px;top:550.91px;font-size:22.2px;color:#30363f;font-weight:400;">Registration</div>
<svg style="position:absolute;left:1896px;top:548.6px;" width="28" height="28" viewBox="0 0 28 28"><path d="M11 3.5 H4.5 Q2.5 3.5 2.5 5.5 V23 Q2.5 25 4.5 25 H19.5 Q21.5 25 21.5 23 V15" fill="none" stroke="#2f7af5" stroke-width="1.9" stroke-linecap="round" stroke-linejoin="round"/><path d="M12.5 14.5 L25 2 M18.5 2 H25 V8.5" fill="none" stroke="#2f7af5" stroke-width="1.9" stroke-linecap="round" stroke-linejoin="round"/></svg>
<svg style="position:absolute;left:1950px;top:546.1px;" width="28" height="31" viewBox="0 0 28 31"><path d="M8.5 8 H5 Q2.5 8 2.5 10.5 V25.5 Q2.5 28 5 28 H13 Q15.5 28 15.5 25.5 V23" fill="none" stroke="#2f7af5" stroke-width="1.9" stroke-linecap="round" stroke-linejoin="round"/><path d="M10.5 2.5 H20.5 L25.5 7.5 V20.5 Q25.5 23 23 23 H11 Q8.5 23 8.5 20.5 V4.5 Q8.5 2.5 10.5 2.5 Z M20.5 2.5 V7.5 H25.5" fill="none" stroke="#2f7af5" stroke-width="1.9" stroke-linecap="round" stroke-linejoin="round"/></svg>
<div style="left:1542.2px;top:607.1px;width:41.2px;height:41.2px;border-radius:50%;background:#f1f3f6;"></div>
<div class="t" style="left:1596.80px;top:617.01px;font-size:22.2px;color:#30363f;font-weight:400;">Web App</div>
<svg style="position:absolute;left:1896px;top:614.7px;" width="28" height="28" viewBox="0 0 28 28"><path d="M11 3.5 H4.5 Q2.5 3.5 2.5 5.5 V23 Q2.5 25 4.5 25 H19.5 Q21.5 25 21.5 23 V15" fill="none" stroke="#2f7af5" stroke-width="1.9" stroke-linecap="round" stroke-linejoin="round"/><path d="M12.5 14.5 L25 2 M18.5 2 H25 V8.5" fill="none" stroke="#2f7af5" stroke-width="1.9" stroke-linecap="round" stroke-linejoin="round"/></svg>
<svg style="position:absolute;left:1950px;top:612.2px;" width="28" height="31" viewBox="0 0 28 31"><path d="M8.5 8 H5 Q2.5 8 2.5 10.5 V25.5 Q2.5 28 5 28 H13 Q15.5 28 15.5 25.5 V23" fill="none" stroke="#2f7af5" stroke-width="1.9" stroke-linecap="round" stroke-linejoin="round"/><path d="M10.5 2.5 H20.5 L25.5 7.5 V20.5 Q25.5 23 23 23 H11 Q8.5 23 8.5 20.5 V4.5 Q8.5 2.5 10.5 2.5 Z M20.5 2.5 V7.5 H25.5" fill="none" stroke="#2f7af5" stroke-width="1.9" stroke-linecap="round" stroke-linejoin="round"/></svg>
<svg style="position:absolute;left:1550px;top:483px;" width="28" height="25" viewBox="0 0 28 25"><rect x="1.5" y="1.5" width="24.5" height="16.5" rx="2" fill="none" stroke="#343a46" stroke-width="1.8" stroke-linecap="round" stroke-linejoin="round"/><path d="M11 18 L10 22.5 M16.5 18 L17.5 22.5 M7 23 H20.5" fill="none" stroke="#343a46" stroke-width="1.8" stroke-linecap="round" stroke-linejoin="round"/><rect x="10.5" y="18" width="6.5" height="2" fill="#343a46"/></svg>
<svg style="position:absolute;left:1550px;top:551px;" width="28" height="24" viewBox="0 0 28 24"><rect x="1.5" y="1.5" width="24.5" height="20.5" rx="2" fill="none" stroke="#343a46" stroke-width="1.8" stroke-linecap="round" stroke-linejoin="round"/><path d="M1.5 6 H26 M6.5 1.8 V6" fill="none" stroke="#343a46" stroke-width="1.8" stroke-linecap="round" stroke-linejoin="round"/></svg>
<svg style="position:absolute;left:1550px;top:618px;" width="28" height="21" viewBox="0 0 28 21"><path d="M1.5 7 H8 V2.5 L16.5 10 L8 18.5 V13.5 H1.5 Z" fill="none" stroke="#343a46" stroke-width="1.8" stroke-linecap="round" stroke-linejoin="round"/><path d="M15.5 2 H25.5 V19 H15.5" fill="none" stroke="#343a46" stroke-width="1.8" stroke-linecap="round" stroke-linejoin="round"/></svg>
<div style="left:426.2px;top:853.7px;width:527.1px;height:543.1px;box-sizing:border-box;border:1.6px solid #dfe2e9;border-radius:11px;background:#fff;"></div>
<div style="left:450.8px;top:880px;width:4.6px;height:21.5px;background:#2f7bf5;"></div>
<div class="t" style="left:467.50px;top:881.96px;font-size:18px;color:#374151;font-weight:700;">REGISTRATION STATUS</div>
<div style="left:429px;top:917.6px;width:521px;height:1.2px;background:#e7e8ea;"></div>
<div style="left:898.4px;top:886.5px;width:5.8px;height:5.8px;border-radius:50%;background:#a9adb5;"></div>
<div style="left:909.1px;top:886.5px;width:5.8px;height:5.8px;border-radius:50%;background:#a9adb5;"></div>
<div style="left:920.0px;top:886.5px;width:5.8px;height:5.8px;border-radius:50%;background:#a9adb5;"></div>
<div style="left:971.6px;top:853.7px;width:527.4000000000001px;height:543.1px;box-sizing:border-box;border:1.6px solid #dfe2e9;border-radius:11px;background:#fff;"></div>
<div style="left:996.3px;top:880px;width:4.6px;height:21.5px;background:#2f7bf5;"></div>
<div class="t" style="left:1013.00px;top:881.96px;font-size:18px;color:#374151;font-weight:700;">ARRIVAL STATUS</div>
<div style="left:976px;top:917.6px;width:517px;height:1.2px;background:#e7e8ea;"></div>
<div style="left:1444.8px;top:887.4px;width:5.8px;height:5.8px;border-radius:50%;background:#a9adb5;"></div>
<div style="left:1456.1px;top:887.4px;width:5.8px;height:5.8px;border-radius:50%;background:#a9adb5;"></div>
<div style="left:1467.4px;top:887.4px;width:5.8px;height:5.8px;border-radius:50%;background:#a9adb5;"></div>
<div style="left:1517.4px;top:853.7px;width:490.4999999999999px;height:543.1px;box-sizing:border-box;border:1.6px solid #dfe2e9;border-radius:11px;background:#fff;"></div>
<div style="left:1541.8px;top:880px;width:4.6px;height:21.5px;background:#2f7bf5;"></div>
<div class="t" style="left:1559.00px;top:881.96px;font-size:18px;color:#374151;font-weight:700;">LOGIN STATUS</div>
<div style="left:1522px;top:917.6px;width:483px;height:1.2px;background:#e7e8ea;"></div>
<svg style="position:absolute;left:0;top:0" width="2048" height="1398"><path d="M632.35 987.78 A119 119 0 0 1 781.41 1022.88 L758.48 1039.97 A90.4 90.4 0 0 0 645.24 1013.31 Z" fill="#1a7ef5"/><path d="M781.41 1022.88 A119 119 0 0 1 787.14 1156.71 L762.83 1141.64 A90.4 90.4 0 0 0 758.48 1039.97 Z" fill="#59d426"/><path d="M787.14 1156.71 A119 119 0 0 1 567.55 1105.41 L596.02 1102.66 A90.4 90.4 0 0 0 762.83 1141.64 Z" fill="#dcdcdc"/><path d="M567.55 1105.41 A119 119 0 0 1 632.35 987.78 L645.24 1013.31 A90.4 90.4 0 0 0 596.02 1102.66 Z" fill="#f8b63e"/></svg>
<svg style="position:absolute;left:0;top:0" width="2048" height="1398"><path d="M1115.05 1105.43 A119.3 119.3 0 1 1 1335.30 1156.69 L1310.54 1141.40 A90.2 90.2 0 1 0 1144.02 1102.65 Z" fill="#4585ea"/><path d="M1335.30 1156.69 A119.3 119.3 0 0 1 1115.05 1105.43 L1144.02 1102.65 A90.2 90.2 0 0 0 1310.54 1141.40 Z" fill="#90b9f7"/></svg>
<svg style="position:absolute;left:0;top:0" width="2048" height="1398"><path d="M1821.37 1203.45 A120.8 120.8 0 1 1 1785.34 977.26 L1780.12 1008.42 A89.2 89.2 0 1 0 1806.73 1175.45 Z" fill="#f56b6e"/><path d="M1785.34 977.26 A120.8 120.8 0 0 1 1880.92 1131.72 L1850.70 1122.48 A89.2 89.2 0 0 0 1780.12 1008.42 Z" fill="#f6c94c"/><path d="M1880.92 1131.72 A120.8 120.8 0 0 1 1821.37 1203.45 L1806.73 1175.45 A89.2 89.2 0 0 0 1850.70 1122.48 Z" fill="#4b91f6"/></svg>
<div class="t" style="left:385.50px;width:600px;text-align:center;top:1057.28px;font-size:37px;color:#111827;font-weight:700;letter-spacing:1px;">6787</div>
<div class="t" style="left:385.40px;width:600px;text-align:center;top:1111.03px;font-size:16.5px;color:#6b7280;font-weight:700;">CONFIRMED</div>
<div class="t" style="left:933.40px;width:600px;text-align:center;top:1057.28px;font-size:37px;color:#111827;font-weight:700;letter-spacing:1.5px;">3532</div>
<div class="t" style="left:932.80px;width:600px;text-align:center;top:1111.20px;font-size:16.3px;color:#6b7280;font-weight:700;">ARRIVED</div>
<div class="t" style="left:1465.40px;width:600px;text-align:center;top:1063.18px;font-size:37px;color:#111827;font-weight:700;letter-spacing:1.5px;">4520</div>
<div class="t" style="left:1465.40px;width:600px;text-align:center;top:1119.60px;font-size:16.3px;color:#6b7280;font-weight:700;">LOGINS</div>
<div style="left:459.6px;top:1252.7px;width:24.6px;height:24.6px;border-radius:50%;background:#59d426;"></div>
<div class="t" style="left:497.00px;top:1254.20px;font-size:22.8px;color:#30363f;font-weight:400;">Confirmed</div>
<div style="left:680.3px;top:1252.7px;width:24.6px;height:24.6px;border-radius:50%;background:#1a7ef5;"></div>
<div class="t" style="left:718.10px;top:1254.20px;font-size:22.8px;color:#30363f;font-weight:400;">Waiting for Approval</div>
<div style="left:459.6px;top:1297.9px;width:24.6px;height:24.6px;border-radius:50%;background:#f8b63e;"></div>
<div class="t" style="left:497.00px;top:1299.40px;font-size:22.8px;color:#30363f;font-weight:400;">Not Responded</div>
<div style="left:680.3px;top:1297.9px;width:24.6px;height:24.6px;border-radius:50%;background:#dcdcdc;"></div>
<div class="t" style="left:718.10px;top:1299.40px;font-size:22.8px;color:#30363f;font-weight:400;">Not Attending</div>
<div style="left:1072.7px;top:1252.0px;width:24.6px;height:24.6px;border-radius:50%;background:#4585ea;"></div>
<div class="t" style="left:1110.50px;top:1253.50px;font-size:22.8px;color:#30363f;font-weight:400;">Arrived</div>
<div style="left:1247.0px;top:1252.0px;width:24.6px;height:24.6px;border-radius:50%;background:#90b9f7;"></div>
<div class="t" style="left:1285.30px;top:1253.50px;font-size:22.8px;color:#30363f;font-weight:400;">Not Arrived</div>
<div style="left:1570.7px;top:1244.7px;width:24.6px;height:24.6px;border-radius:50%;background:#f56b6e;"></div>
<div class="t" style="left:1608.60px;top:1247.30px;font-size:21.5px;color:#30363f;font-weight:400;">iOS</div>
<div style="left:1703.2px;top:1244.7px;width:24.6px;height:24.6px;border-radius:50%;background:#f6c94c;"></div>
<div class="t" style="left:1740.70px;top:1246.20px;font-size:22.8px;color:#30363f;font-weight:400;">Android</div>
<div style="left:1877.7px;top:1244.7px;width:24.6px;height:24.6px;border-radius:50%;background:#4b91f6;"></div>
<div class="t" style="left:1915.00px;top:1246.20px;font-size:22.8px;color:#30363f;font-weight:400;">Web</div>
</body></html>
